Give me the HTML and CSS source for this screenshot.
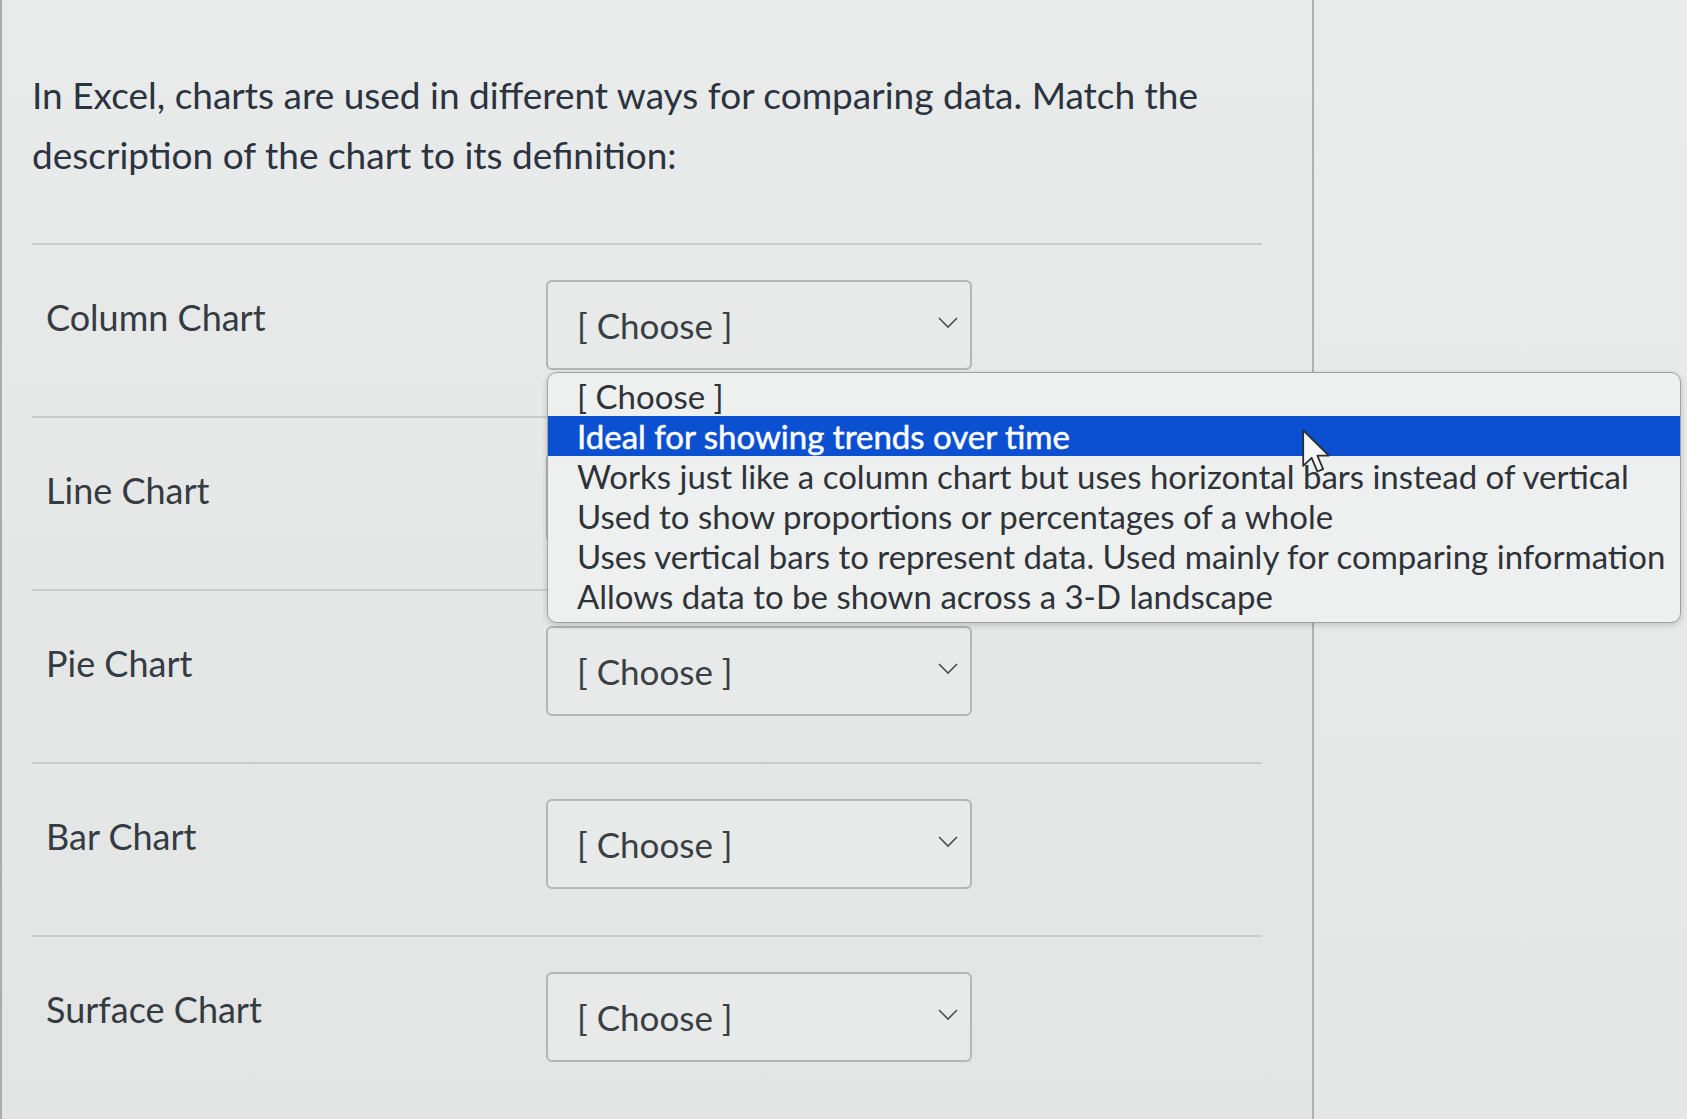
FILE: index.html
```html
<!DOCTYPE html>
<html lang="en">
<head>
<meta charset="utf-8">
<title>Matching question</title>
<link rel="stylesheet" href="styles.css">
</head>
<body>
<div class="page">
  <main class="content">
    <p class="question">In Excel, charts are used in different ways for comparing data. Match the description of the chart to its definition:</p>
    <div class="answers">
      <div class="row">
        <div class="label">Column Chart</div>
        <div class="select"><span>[ Choose ]</span><svg class="chev" viewBox="0 0 20 12" width="20" height="12"><path d="M1 1 L10 10 L19 1" /></svg></div>
      </div>
      <div class="row">
        <div class="label">Line Chart</div>
        <div class="select is-open"><span>[ Choose ]</span><svg class="chev" viewBox="0 0 20 12" width="20" height="12"><path d="M1 1 L10 10 L19 1" /></svg></div>
      </div>
      <div class="row">
        <div class="label">Pie Chart</div>
        <div class="select"><span>[ Choose ]</span><svg class="chev" viewBox="0 0 20 12" width="20" height="12"><path d="M1 1 L10 10 L19 1" /></svg></div>
      </div>
      <div class="row">
        <div class="label">Bar Chart</div>
        <div class="select"><span>[ Choose ]</span><svg class="chev" viewBox="0 0 20 12" width="20" height="12"><path d="M1 1 L10 10 L19 1" /></svg></div>
      </div>
      <div class="row">
        <div class="label">Surface Chart</div>
        <div class="select"><span>[ Choose ]</span><svg class="chev" viewBox="0 0 20 12" width="20" height="12"><path d="M1 1 L10 10 L19 1" /></svg></div>
      </div>
    </div>
  </main>
  <aside class="side"></aside>

  <ul class="dropdown">
    <li>[ Choose ]</li>
    <li class="active">Ideal for showing trends over time</li>
    <li>Works just like a column chart but uses horizontal bars instead of vertical</li>
    <li>Used to show proportions or percentages of a whole</li>
    <li>Uses vertical bars to represent data. Used mainly for comparing information</li>
    <li>Allows data to be shown across a 3-D landscape</li>
  </ul>

  <svg class="cursor" viewBox="0 0 14 22" width="31" height="49">
    <path d="M1 1 L1 17 L4.8 13.4 L7.4 19.6 L10 18.5 L7.4 12.4 L12.6 12.4 Z" />
  </svg>
</div>
</body>
</html>
```

FILE: styles.css
```css
html, body {
  margin: 0;
  padding: 0;
}

body {
  background: #e5e8e6;
  font-family: Lato, "Open Sans", "Liberation Sans", sans-serif;
  color: #2f3640;
}

.page {
  position: relative;
  display: flex;
  width: 1687px;
  height: 1119px;
  overflow: hidden;
  background: linear-gradient(180deg, #e9ebea 0%, #e4e7e5 60%, #e2e5e3 100%);
}

.content {
  width: 1314px;
  flex: none;
  border-left: 2px solid #a9acab;
  border-right: 2px solid #aeb1b0;
  box-sizing: border-box;
  padding: 65px 50px 0 30px;
}

.side {
  flex: 1;
  background: linear-gradient(180deg, #eaeceb 0%, #e5e7e6 100%);
}

.question {
  margin: 0;
  font-size: 37px;
  line-height: 60px;
  color: #2b3340;
}

.answers {
  margin-top: 58px;
}

.row {
  display: grid;
  grid-template-columns: 514px 426px;
  border-top: 2px solid #caccca;
  padding: 35px 0 46px;
}

.label {
  padding: 15px 0 0 14px;
  font-size: 36px;
  line-height: 44px;
  color: #353b42;
}

.select {
  height: 90px;
  box-sizing: border-box;
  border: 2px solid #b3b6b5;
  border-radius: 6px;
  background: #e7eae8;
  display: flex;
  align-items: center;
  justify-content: space-between;
  padding: 0 12px 0 29px;
  font-size: 35px;
  color: #3a3f45;
}

.select.is-open > * {
  visibility: hidden;
}

.chev {
  margin-top: -4px;
}

.chev path {
  fill: none;
  stroke: #4a4e52;
  stroke-width: 1.6;
}

.dropdown {
  position: absolute;
  left: 547px;
  top: 372px;
  width: 1134px;
  margin: 0;
  padding: 3px 0 6px;
  list-style: none;
  box-sizing: border-box;
  border: 1.5px solid #9fa2a1;
  border-radius: 10px;
  background: #eef0ef;
  box-shadow: 0 2px 6px rgba(0, 0, 0, 0.18);
  overflow: hidden;
}

.dropdown li {
  height: 40px;
  line-height: 40px;
  padding-left: 29px;
  font-size: 33px;
  color: #2e3339;
  white-space: nowrap;
}

.dropdown li.active {
  background: #0c50d2;
  color: #ffffff;
  -webkit-text-stroke: 0.5px #ffffff;
}

.cursor {
  position: absolute;
  left: 1301px;
  top: 428px;
}

.cursor path {
  fill: #f4f5f6;
  stroke: #2a2d30;
  stroke-width: 0.8;
  stroke-linejoin: round;
}
```
